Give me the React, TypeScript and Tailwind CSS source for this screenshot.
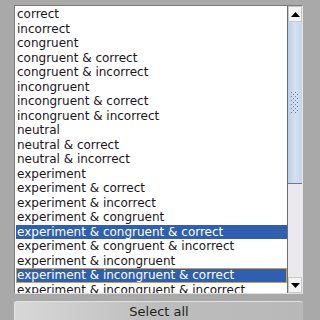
import React from "react";

const items = [
  "correct",
  "incorrect",
  "congruent",
  "congruent & correct",
  "congruent & incorrect",
  "incongruent",
  "incongruent & correct",
  "incongruent & incorrect",
  "neutral",
  "neutral & correct",
  "neutral & incorrect",
  "experiment",
  "experiment & correct",
  "experiment & incorrect",
  "experiment & congruent",
  "experiment & congruent & correct",
  "experiment & congruent & incorrect",
  "experiment & incongruent",
  "experiment & incongruent & correct",
  "experiment & incongruent & incorrect",
];

const selected = [15, 18];
const focused = 18;

function Grip() {
  const dots = [];
  for (let r = 0; r < 11; r++) {
    for (let c = 0; c < 4; c++) {
      if ((r + c) % 2 === 0) dots.push(<rect key={`${r}-${c}`} x={c * 2 + 1} y={r * 2 + 1} width="1" height="1" fill="#5d7aa6" />);
    }
  }
  return (
    <svg width="10" height="24" viewBox="0 0 10 24">
      {dots}
    </svg>
  );
}

function ArrowButton({ up }: { up?: boolean }) {
  return (
    <div className="h-[16px] flex items-center justify-center bg-[#f3f3f3] border border-[#c8c8c8]">
      <svg width="9" height="5" viewBox="0 0 9 5">
        <path d={up ? "M0 5 L4.5 0 L9 5 Z" : "M0 0 L4.5 5 L9 0 Z"} fill="#000" />
      </svg>
    </div>
  );
}

export default function App() {
  return (
    <div
      className="w-[320px] h-[320px] bg-[#a9a9a9] pl-[14px] pt-[5px] flex flex-col overflow-hidden"
      style={{ fontFamily: '"DejaVu Sans", Verdana, sans-serif' }}
    >
      {/* List box */}
      <div className="w-[289px] h-[289px] flex bg-white border-t border-l border-[#7a7a7a] border-r border-r-[#e8e8e8] border-b border-b-[#e0e0e0]">
        <div className="flex-1 overflow-hidden pt-[1px] pl-[1px]">
          {items.map((it, i) => {
            const sel = selected.includes(i);
            return (
              <div
                key={it}
                className={`h-[14.5px] leading-[14px] text-[12px] whitespace-nowrap pl-[1px] ${
                  sel ? "bg-[#2f5fae] text-white" : "text-[#1a141c]"
                } ${i === focused ? "outline outline-1 outline-[#c9a24a] -outline-offset-1" : ""}`}
              >
                {it}
              </div>
            );
          })}
        </div>
        {/* Scrollbar */}
        <div className="w-[15px] flex flex-col border-l border-[#6c7078] bg-[#ece9ee]">
          <ArrowButton up />
          <div className="h-[162px] bg-gradient-to-r from-[#bccfe6] via-[#d4e1f1] to-[#c6d6ea] border-b border-[#6b7a92] flex items-center justify-center">
            <Grip />
          </div>
          <div className="flex-1" />
          <ArrowButton />
        </div>
      </div>

      {/* Button */}
      <div className="mt-[7px] w-[289px] h-[30px] rounded-t-[3px] bg-gradient-to-r from-[#d8d8d8] via-[#bdbdbd] to-[#b8b8b8] border-t border-l border-[#e2e2e2] flex justify-center pt-[2px]">
        <span className="text-[13px] leading-[15px] text-[#1e1e1e]">Select all</span>
      </div>
    </div>
  );
}
